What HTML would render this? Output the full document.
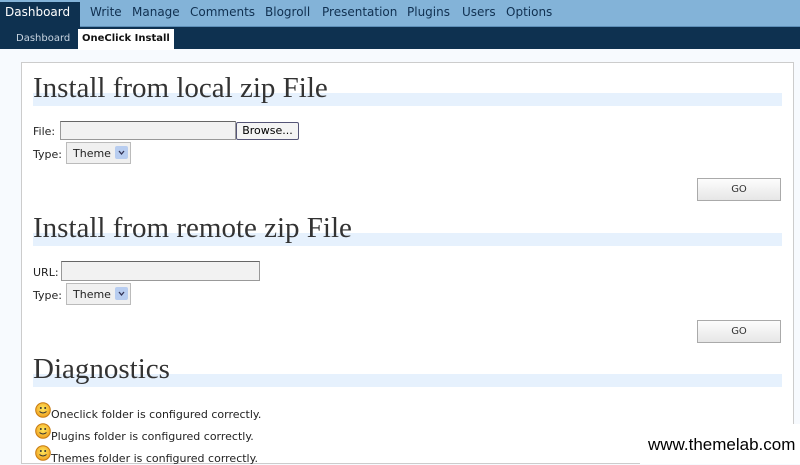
<!DOCTYPE html><html><head><style>
body{margin:0;width:800px;height:464px;overflow:hidden;background:#f7fafe;font-family:"DejaVu Sans","Liberation Sans",sans-serif;position:relative}
.a{position:absolute}
.top{left:0;top:0;width:800px;height:26px;background:#83b3d8;border-bottom:1px solid #5d8fb8}
.top span{position:absolute;top:5px;font-size:12px;color:#103050}
.sub{left:0;top:27px;width:800px;height:22px;background:#0e3150}
.sub span{position:absolute;font-size:10px}
.panel{left:21px;top:62px;width:771px;height:400px;background:#fff;border:1px solid #ccc}
.band{left:33px;width:749px;height:13px;background:#e6f1fd}
h1{position:absolute;margin:0;font-family:"Liberation Serif",serif;font-weight:normal;font-size:29px;color:#333;left:33px}
.lbl{font-size:11px;color:#222}
.inp{background:#f2f2f2;border:1px solid #999;border-top-color:#666}
.sel{background:#f0f0f0;border:1px solid #bbb;font-size:11px;color:#222}
.sel i{position:absolute;right:2px;top:3px;width:13px;height:13px;background:#b8cdf0;border-radius:2px}
.go{width:82px;height:21px;border:1px solid #aaa;background:linear-gradient(#fdfdfd,#e6e6e6);font-size:10px;text-align:center;line-height:21px;color:#333}
.sm{width:16px;height:16px}
.txt{font-size:11px;color:#222}
</style></head><body>
<div class="a top">
<div class="a" style="left:0;top:2px;width:80px;height:25px;background:#0e3150"></div>
<span style="left:5px;color:#fff;font-size:12px">Dashboard</span>
<span style="left:90px">Write</span><span style="left:132px">Manage</span><span style="left:190px">Comments</span><span style="left:265px">Blogroll</span><span style="left:322px">Presentation</span><span style="left:407px">Plugins</span><span style="left:462px">Users</span><span style="left:506px">Options</span>
</div>
<div class="a sub">
<span style="left:16px;top:6px;color:#c8d4e0">Dashboard</span>
<div class="a" style="left:78px;top:2px;width:96px;height:21px;background:#fff"></div>
<span style="left:82px;top:6px;color:#111;font-weight:bold">OneClick Install</span>
</div>
<div class="a panel"></div>
<div class="a band" style="top:93px"></div>
<h1 style="top:72px">Install from local zip File</h1>
<div class="a lbl" style="left:33px;top:125px">File:</div>
<div class="a inp" style="left:60px;top:121px;width:174px;height:17px"></div>
<div class="a" style="left:236px;top:122px;width:61px;height:16px;border:1px solid #557;border-radius:2px;background:#f4f4f4;font-size:11px;text-align:center;line-height:16px">Browse...</div>
<div class="a lbl" style="left:33px;top:148px">Type:</div>
<div class="a sel" style="left:66px;top:142px;width:63px;height:20px"><span class="a" style="left:6px;top:4px">Theme</span><i><svg width="13" height="13"><path d="M4 5l2.5 3 2.5-3" fill="none" stroke="#335" stroke-width="1.3"/></svg></i></div>
<div class="a go" style="left:697px;top:178px">GO</div>
<div class="a band" style="top:233px"></div>
<h1 style="top:212px">Install from remote zip File</h1>
<div class="a lbl" style="left:33px;top:266px">URL:</div>
<div class="a inp" style="left:61px;top:261px;width:197px;height:18px"></div>
<div class="a lbl" style="left:33px;top:289px">Type:</div>
<div class="a sel" style="left:66px;top:283px;width:63px;height:20px"><span class="a" style="left:6px;top:4px">Theme</span><i><svg width="13" height="13"><path d="M4 5l2.5 3 2.5-3" fill="none" stroke="#335" stroke-width="1.3"/></svg></i></div>
<div class="a go" style="left:697px;top:320px">GO</div>
<div class="a band" style="top:374px"></div>
<h1 style="top:353px">Diagnostics</h1>
<svg width="0" height="0" style="position:absolute"><defs><radialGradient id="g" cx=".5" cy=".4" r=".6"><stop offset="0" stop-color="#ffe95e"/><stop offset="1" stop-color="#f0a020"/></radialGradient></defs></svg>
<svg class="a sm" style="left:35px;top:402px" viewBox="0 0 16 16"><circle cx="8" cy="8" r="7.3" fill="url(#g)" stroke="#c77a10"/><circle cx="5.8" cy="6" r="1" fill="#333"/><circle cx="10.2" cy="6" r="1" fill="#333"/><path d="M4.5 9.5q3.5 3 7 0" fill="none" stroke="#333" stroke-width="1"/></svg>
<div class="a txt" style="left:51px;top:408px">Oneclick folder is configured correctly.</div>
<svg class="a sm" style="left:35px;top:423px" viewBox="0 0 16 16"><circle cx="8" cy="8" r="7.3" fill="url(#g)" stroke="#c77a10"/><circle cx="5.8" cy="6" r="1" fill="#333"/><circle cx="10.2" cy="6" r="1" fill="#333"/><path d="M4.5 9.5q3.5 3 7 0" fill="none" stroke="#333" stroke-width="1"/></svg>
<div class="a txt" style="left:51px;top:430px">Plugins folder is configured correctly.</div>
<svg class="a sm" style="left:35px;top:445px" viewBox="0 0 16 16"><circle cx="8" cy="8" r="7.3" fill="url(#g)" stroke="#c77a10"/><circle cx="5.8" cy="6" r="1" fill="#333"/><circle cx="10.2" cy="6" r="1" fill="#333"/><path d="M4.5 9.5q3.5 3 7 0" fill="none" stroke="#333" stroke-width="1"/></svg>
<div class="a txt" style="left:51px;top:452px">Themes folder is configured correctly.</div>
<div class="a" style="left:640px;top:424px;width:160px;height:40px;background:#fff"></div>
<div class="a" style="left:648px;top:435px;font-family:'Liberation Sans',sans-serif;font-size:17px;color:#000">www.themelab.com</div>
</body></html>
